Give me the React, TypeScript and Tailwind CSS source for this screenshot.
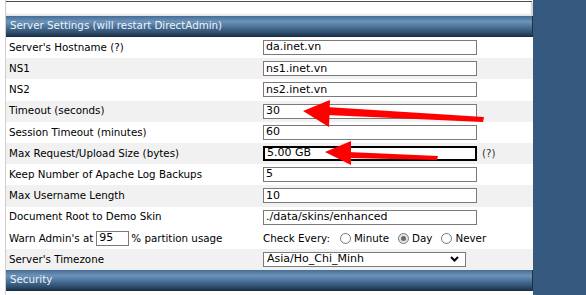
import React from 'react';

const font = { fontFamily: '"DejaVu Sans", Verdana, sans-serif' };

const rows: { label: string; value: string; focus?: boolean; help?: boolean }[] = [
  { label: "Server's Hostname (?)", value: 'da.inet.vn' },
  { label: 'NS1', value: 'ns1.inet.vn' },
  { label: 'NS2', value: 'ns2.inet.vn' },
  { label: 'Timeout (seconds)', value: '30' },
  { label: 'Session Timeout (minutes)', value: '60' },
  { label: 'Max Request/Upload Size (bytes)', value: '5.00 GB', focus: true, help: true },
  { label: 'Keep Number of Apache Log Backups', value: '5' },
  { label: 'Max Username Length', value: '10' },
  { label: 'Document Root to Demo Skin', value: './data/skins/enhanced' },
];

const Header: React.FC<{ title: string }> = ({ title }) => (
  <div className="h-[21px] flex items-center pl-[4px] text-[10.3px] text-[#eef3f8] bg-[linear-gradient(to_bottom,#446d96_0%,#6d93b8_28%,#4b729a_55%,#2c4b6b_85%,#1d3550_100%)] border-b border-[#1c2c3c] border-r border-r-[#22313f]">
    {title}
  </div>
);

const Radio: React.FC<{ label: string; checked?: boolean }> = ({ label, checked }) => (
  <span className="flex items-center gap-[3px]">
    <span className={`w-[11px] h-[11px] rounded-full border border-[#7a7a7a] flex items-center justify-center ${checked ? 'bg-[#e4e4e4]' : 'bg-white'}`}>
      {checked && <span className="w-[5px] h-[5px] rounded-full bg-[#6a6a6a]" />}
    </span>
    <span>{label}</span>
  </span>
);

export default function App() {
  return (
    <div className="relative w-[586px] h-[295px] overflow-hidden bg-white flex text-black" style={font}>
      <div className="w-[528px] h-full border-l border-[#cfcfcf] ml-[5px] flex flex-col shrink-0">
        <div className="h-[2px] border-b border-[#4a4a4a] bg-white mr-[1px]" />
        <div className="h-[14px] bg-white border-r-2 border-[#d6d6d6] shadow-[inset_0_-2px_2px_#e6e6e6]" />
        <Header title="Server Settings (will restart DirectAdmin)" />
        {rows.map((r, i) => (
          <div key={r.label} className={`h-[21.2px] flex items-center text-[10.3px] ${i % 2 ? 'bg-[#f1f1f1]' : 'bg-white'}`}>
            <div className="w-[257px] pl-[3px]">{r.label}</div>
            <input
              readOnly
              value={r.value}
              className={`w-[214px] h-[15px] px-[2px] text-[11px] bg-white outline-none ${r.focus ? 'border-2 border-black' : 'border border-[#7a7a7a]'}`}
              style={font}
            />
            {r.help && <span className="ml-[5px] text-[#333]">(?)</span>}
          </div>
        ))}
        <div className="h-[21.2px] flex items-center text-[10.3px] bg-white">
          <div className="w-[257px] pl-[3px] flex items-center">
            <span>Warn Admin's at</span>
            <input
              readOnly
              value="95"
              className="w-[33px] h-[15px] ml-[3px] px-[2px] text-[11px] border border-[#7a7a7a] outline-none"
              style={font}
            />
            <span className="ml-[2px]">% partition usage</span>
          </div>
          <div className="flex items-center gap-[9px]">
            <span className="mr-[1px]">Check Every:</span>
            <Radio label="Minute" />
            <Radio label="Day" checked />
            <Radio label="Never" />
          </div>
        </div>
        <div className="h-[21.2px] flex items-center text-[10.3px] bg-[#f1f1f1]">
          <div className="w-[257px] pl-[3px]">Server's Timezone</div>
          <div className="w-[203px] h-[15px] border border-[#7a7a7a] bg-white flex items-center justify-between pl-[3px] pr-[6px] text-[11px]">
            <span>Asia/Ho_Chi_Minh</span>
            <svg width="9" height="6" viewBox="0 0 9 6">
              <path d="M1 1 L4.5 4.5 L8 1" fill="none" stroke="#000" strokeWidth="2" />
            </svg>
          </div>
        </div>
        <Header title="Security" />
      </div>
      <div className="flex-1 h-full bg-[#365a7f]" />
      <svg className="absolute left-0 top-0 pointer-events-none" width="586" height="295" viewBox="0 0 586 295">
        <path d="M326 107 L484 117 L483 122 L326 115 Z" fill="#ff0000" />
        <path d="M303 111 L330 100 L329 127 Z" fill="#ff0000" />
        <path d="M348 152 L438 156 L437 160 L348 158 Z" fill="#ff0000" />
        <path d="M325 152 L351 141 L351 165 Z" fill="#ff0000" />
      </svg>
    </div>
  );
}
